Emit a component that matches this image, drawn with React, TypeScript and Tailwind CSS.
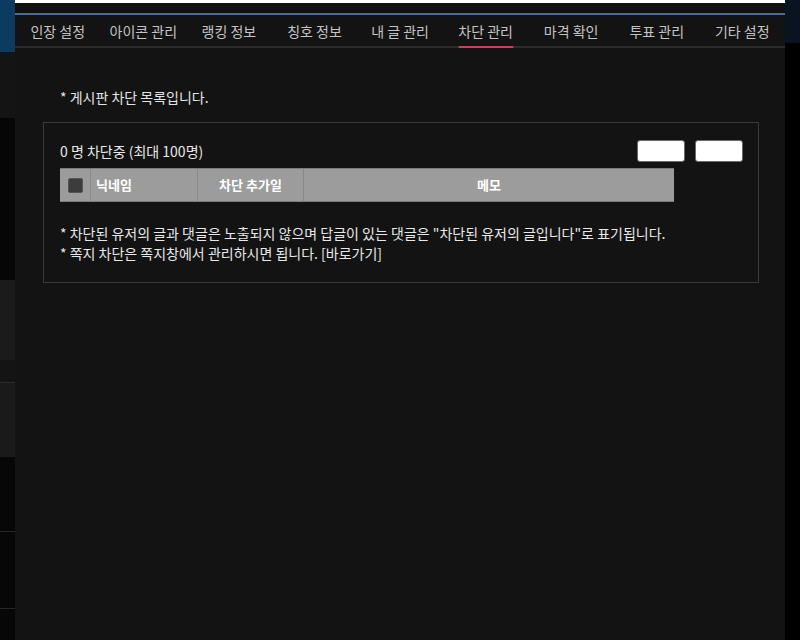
import React from 'react';

const tabs = ['인장 설정', '아이콘 관리', '랭킹 정보', '칭호 정보', '내 글 관리', '차단 관리', '마격 확인', '투표 관리', '기타 설정'];

const BackdropLeft: React.FC = () => (
    <div className="w-[15px] shrink-0 flex flex-col">
        <div className="h-[52px] bg-[#0d3a5f]" />
        <div className="h-[66px] bg-[#141414]" />
        <div className="h-[162px] bg-[#060606]" />
        <div className="h-[80px] bg-[#1b1b1b]" />
        <div className="h-[23px] bg-[#141414] border-b border-[#2c2c2c]" />
        <div className="h-[74px] bg-[#1a1a1a]" />
        <div className="h-[75px] bg-[#070707] border-b border-[#262626]" />
        <div className="h-[77px] bg-[#070707] border-b border-[#262626]" />
        <div className="flex-1 bg-[#070707]" />
    </div>
);

const App: React.FC = () => {
    const active = '차단 관리';

    return (
        <div
            className="w-[800px] h-[640px] flex bg-black overflow-hidden"
            style={{ fontFamily: '"Noto Sans CJK KR", "Noto Sans", sans-serif' }}
        >
            <BackdropLeft />

            <div className="w-[770px] shrink-0 flex flex-col bg-[#131313]">
                <div className="h-[3px] bg-white" />
                <div className="h-[10px] bg-[#120f10]" />
                <div className="h-[2px] bg-[#4a6a9a]" />

                <nav className="h-[33px] flex border-b-2 border-[#2b2b2b]">
                    {tabs.map((tab) => (
                        <div key={tab} className="flex-1 relative flex items-center justify-center">
                            <span className="text-[14px] text-[#c4c4c4] leading-none">{tab}</span>
                            {tab === active && (
                                <span className="absolute bottom-[-2px] left-1/2 -translate-x-1/2 w-[55px] h-[2px] bg-[#d23f62] rounded-full" />
                            )}
                        </div>
                    ))}
                </nav>

                <div className="px-[28px] pt-[39px]">
                    <p className="pl-[17px] text-[14px] text-[#e4e4e4] leading-[20px]">* 게시판 차단 목록입니다.</p>

                    <div className="mt-[15px] w-[716px] border border-[#3a3a3a] pl-[16px] pr-[15px] pt-[17px] pb-[19px]">
                        <div className="h-[22px] flex items-center justify-between">
                            <span className="text-[14px] text-[#e8e8e8] leading-[20px]">0 명 차단중 (최대 100명)</span>
                            <div className="flex gap-[10px]">
                                <button className="w-[48px] h-[22px] bg-white border border-[#6a6a6a] rounded-[3px]" />
                                <button className="w-[48px] h-[22px] bg-white border border-[#6a6a6a] rounded-[3px]" />
                            </div>
                        </div>

                        <div className="mt-[6px] w-[614px] h-[34px] flex bg-[#9c9c9c] border-y border-[#7c7c7c] text-[13px] font-bold text-white">
                            <div className="w-[31px] flex items-center justify-center border-r border-[#888]">
                                <span className="w-[15px] h-[15px] bg-[#3c3c3c] rounded-[2px] border border-[#555]" />
                            </div>
                            <div className="w-[107px] flex items-center pl-[5px] border-r border-[#888]">닉네임</div>
                            <div className="w-[106px] flex items-center justify-center border-r border-[#888]">차단 추가일</div>
                            <div className="flex-1 flex items-center justify-center">메모</div>
                        </div>

                        <div className="mt-[21px] text-[14px] text-[#e8e8e8] leading-[20px]">
                            <p>* 차단된 유저의 글과 댓글은 노출되지 않으며 답글이 있는 댓글은 "차단된 유저의 글입니다"로 표기됩니다.</p>
                            <p>* 쪽지 차단은 쪽지창에서 관리하시면 됩니다. [바로가기]</p>
                        </div>
                    </div>
                </div>
            </div>

            <div className="flex-1 flex flex-col">
                <div className="h-[43px] bg-[#0a1420]" />
                <div className="flex-1 bg-black" />
            </div>
        </div>
    );
};

export default App;
